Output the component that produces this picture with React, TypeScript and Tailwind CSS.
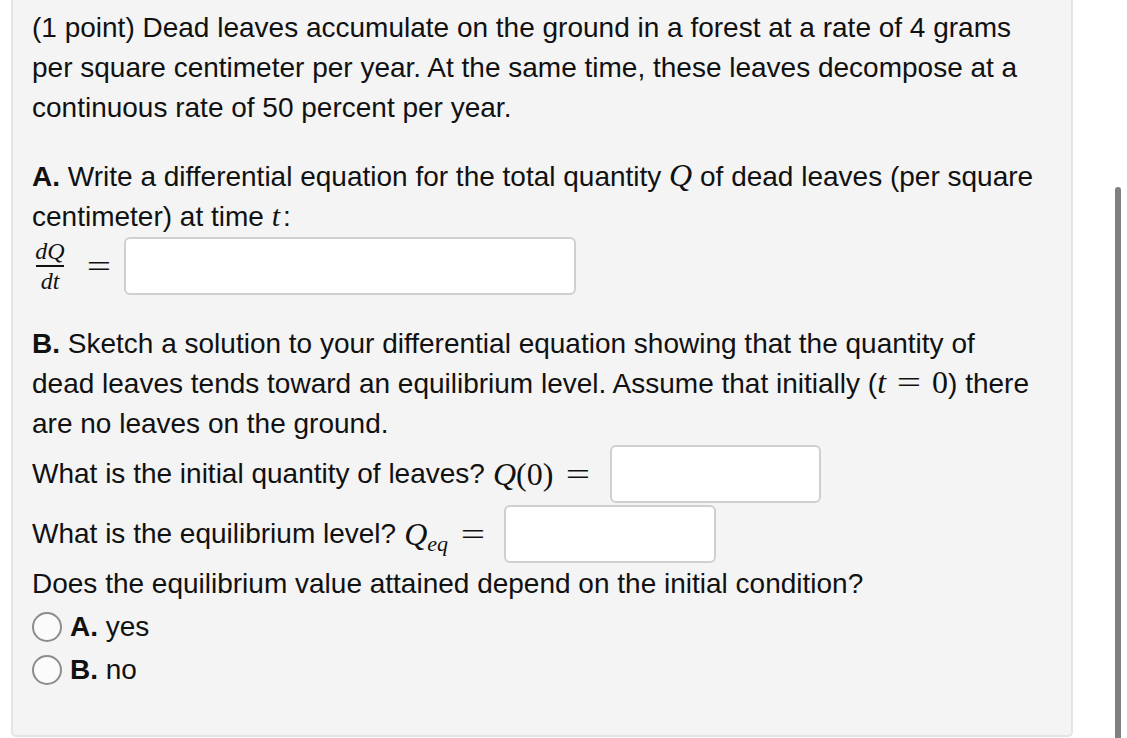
import React from 'react';

const M = ({ children, className = '' }: { children: React.ReactNode; className?: string }) => (
  <span className={`font-['Liberation_Serif',serif] leading-none ${className}`}>{children}</span>
);

const Eq = ({ className = '' }: { className?: string }) => (
  <span className={`inline-block scale-x-[1.35] font-['Liberation_Serif',serif] text-[32px] leading-none ${className}`}>=</span>
);

const Box = ({ w }: { w: string }) => (
  <div className={`${w} h-[58px] shrink-0 rounded-[6px] border-2 border-[#cfcfcf] bg-white`} />
);

const Radio = ({ letter, label }: { letter: string; label: string }) => (
  <div className="flex h-[43px] items-center">
    <div className="h-[30px] w-[30px] shrink-0 rounded-full border-[2.5px] border-[#8c8c8c] bg-[#fbfbfb]" />
    <span className="ml-[8px]">
      <b>{letter}.</b> {label}
    </span>
  </div>
);

export default function App() {
  return (
    <div className="relative min-h-[738px] bg-white font-['Liberation_Sans',Arial,sans-serif] text-[28px] leading-[40px] text-[#111]">
      <div className="ml-[11px] h-[737px] w-[1062px] rounded-b-[5px] border-x-2 border-b-2 border-[#e4e4e4] bg-[#f4f4f4] pl-[19px] pr-[30px] pt-[8px]">
        <p>
          (1 point) Dead leaves accumulate on the ground in a forest at a rate of 4 grams per square centimeter per year. At the same time, these leaves decompose at a continuous rate of 50 percent per year.
        </p>

        <p className="mt-[29px]">
          <b>A.</b> Write a differential equation for the total quantity <M className="italic text-[32px]">Q</M> of dead leaves (per square centimeter) at time <M className="italic text-[30px]">t</M>
          <span className="ml-[3px]">:</span>
        </p>
        <div className="flex h-[58px] items-center">
          <div className="ml-[2px] flex w-[32px] flex-col items-center font-['Liberation_Serif',serif] text-[24px] italic leading-[28px]">
            <span>dQ</span>
            <span className="h-[2px] w-[28px] shrink-0 bg-[#111]" />
            <span>dt</span>
          </div>
          <Eq className="ml-[24px]" />
          <div className="ml-[16px]">
            <Box w="w-[452px]" />
          </div>
        </div>

        <p className="mt-[29px]">
          <b>B.</b> Sketch a solution to your differential equation showing that the quantity of dead leaves tends toward an equilibrium level. Assume that initially (<M className="italic text-[32px]">t</M>
          <Eq className="mx-[14px]" />
          <M className="text-[32px]">0</M>) there are no leaves on the ground.
        </p>
        <div className="mt-[1px] flex h-[58px] items-center">
          <span>What is the initial quantity of leaves?</span>
          <M className="ml-[8px] text-[32px]">
            <i>Q</i>(0)
          </M>
          <Eq className="ml-[16px]" />
          <div className="ml-[23px]">
            <Box w="w-[211px]" />
          </div>
        </div>
        <div className="mt-[2px] flex h-[58px] items-center">
          <span>What is the equilibrium level?</span>
          <M className="ml-[8px] text-[32px] italic">
            Q<sub className="text-[22px]">eq</sub>
          </M>
          <Eq className="ml-[16px]" />
          <div className="ml-[22px]">
            <Box w="w-[212px]" />
          </div>
        </div>
        <p className="mt-[1px]">Does the equilibrium value attained depend on the initial condition?</p>
        <div className="mt-[1px] flex flex-col">
          <Radio letter="A" label="yes" />
          <Radio letter="B" label="no" />
        </div>
      </div>
      <div className="absolute left-[1115px] top-[187px] h-[551px] w-[6px] rounded-t-[3px] bg-[#808080]" />
    </div>
  );
}
